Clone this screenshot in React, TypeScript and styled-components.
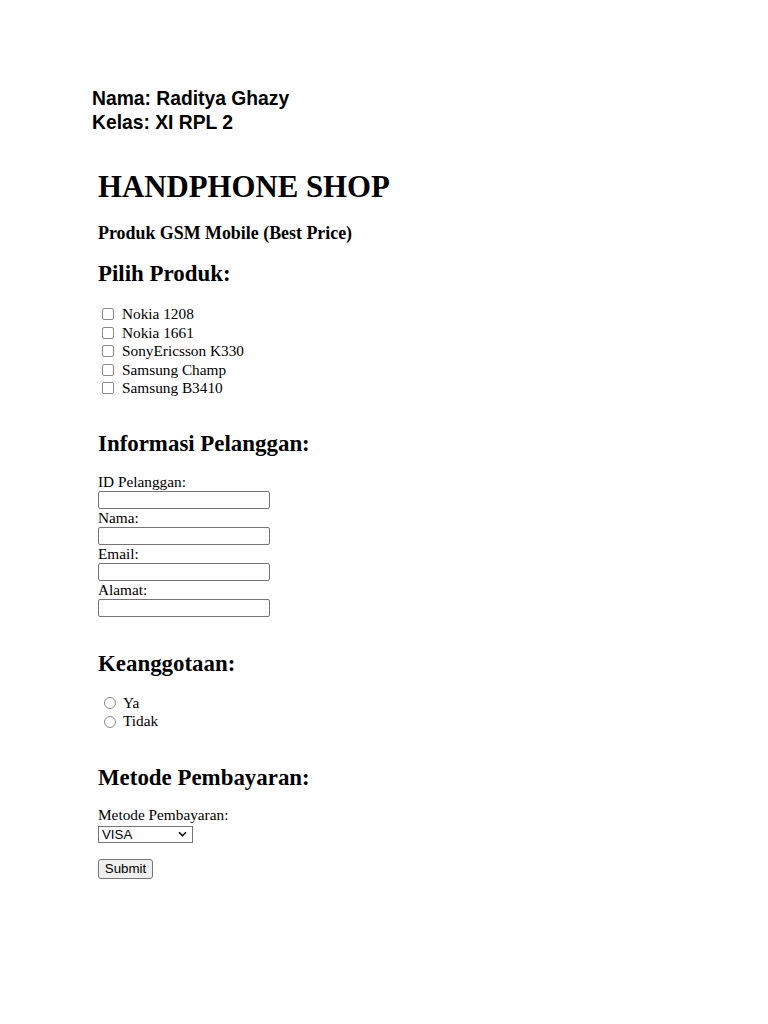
import React from 'react';
import styled, { createGlobalStyle } from 'styled-components';

const GlobalStyle = createGlobalStyle`
  html, body {
    margin: 0;
    padding: 0;
    background: #ffffff;
  }
  body {
    font-family: "Liberation Serif", "Times New Roman", serif;
    color: #000000;
  }
`;

const Page = styled.div`
  width: 768px;
  min-height: 1024px;
  padding-top: 87px;
  box-sizing: border-box;
`;

const Header = styled.div`
  margin-left: 92px;
  font-family: "Liberation Sans", Arial, sans-serif;
  font-weight: bold;
  font-size: 19.3px;
  line-height: 24px;
`;

const Content = styled.div`
  margin-left: 98px;
`;

const Title = styled.h1`
  margin: 35px 0 0 0;
  font-size: 30.8px;
  line-height: 35px;
  font-weight: bold;
`;

const Subtitle = styled.h3`
  margin: 18px 0 0 0;
  font-size: 17.9px;
  line-height: 21px;
  font-weight: bold;
`;

const SectionTitle = styled.h2<{ $gap: number }>`
  margin: ${(p) => p.$gap}px 0 0 0;
  font-size: 22.9px;
  line-height: 26px;
  font-weight: bold;
`;

const OptionList = styled.div<{ $gap: number }>`
  margin-top: ${(p) => p.$gap}px;
  display: flex;
  flex-direction: column;
`;

const OptionRow = styled.label<{ $height: number }>`
  display: flex;
  align-items: center;
  height: ${(p) => p.$height}px;
  font-size: 15.3px;
  line-height: ${(p) => p.$height}px;
`;

const CheckBox = styled.input`
  appearance: none;
  width: 12px;
  height: 12px;
  margin: 0 8px 0 4px;
  border: 1px solid #8a8a8a;
  border-radius: 2px;
  box-sizing: border-box;
  background: #ffffff;
`;

const RadioButton = styled.input`
  appearance: none;
  width: 12px;
  height: 12px;
  margin: 0 7px 0 6px;
  border: 1px solid #8a8a8a;
  border-radius: 50%;
  box-sizing: border-box;
  background: #ffffff;
`;

const Fields = styled.div`
  margin-top: 15.5px;
  display: flex;
  flex-direction: column;
`;

const FieldLabel = styled.label`
  display: block;
  font-size: 15.3px;
  line-height: 18.5px;
`;

const TextInput = styled.input`
  display: block;
  width: 172px;
  height: 17.5px;
  margin: 0;
  padding: 0 2px;
  box-sizing: border-box;
  border: 1px solid #767676;
  border-radius: 2px;
  font-family: "Liberation Sans", Arial, sans-serif;
  font-size: 12.7px;
`;

const PaymentBlock = styled.div`
  margin-top: 15.3px;
`;

const SelectWrap = styled.div`
  position: relative;
  width: 95px;
  margin-top: 1px;
`;

const Select = styled.select`
  display: block;
  appearance: none;
  width: 95px;
  height: 17px;
  margin: 0;
  padding: 0 0 0 3px;
  box-sizing: border-box;
  border: 1px solid #767676;
  border-radius: 0;
  background: #ffffff;
  font-family: "Liberation Sans", Arial, sans-serif;
  font-size: 13.3px;
  line-height: 15px;
  color: #000000;
`;

const Chevron = styled.svg`
  position: absolute;
  right: 6px;
  top: 5px;
  width: 9px;
  height: 6px;
  pointer-events: none;
`;

const SubmitButton = styled.button`
  display: block;
  margin-top: 16px;
  width: 55px;
  height: 20px;
  padding: 0;
  box-sizing: border-box;
  border: 1px solid #767676;
  border-radius: 3px;
  background: #efefef;
  font-family: "Liberation Sans", Arial, sans-serif;
  font-size: 13.3px;
  color: #000000;
`;

const products = ['Nokia 1208', 'Nokia 1661', 'SonyEricsson K330', 'Samsung Champ', 'Samsung B3410'];
const fields = ['ID Pelanggan:', 'Nama:', 'Email:', 'Alamat:'];

export default function App() {
  return (
    <Page>
      <GlobalStyle />
      <Header>
        <div>Nama: Raditya Ghazy</div>
        <div>Kelas: XI RPL 2</div>
      </Header>
      <Content>
        <Title>HANDPHONE SHOP</Title>
        <Subtitle>Produk GSM Mobile (Best Price)</Subtitle>
        <form onSubmit={(e) => e.preventDefault()}>
          <SectionTitle $gap={17}>Pilih Produk:</SectionTitle>
          <OptionList $gap={18}>
            {products.map((p) => (
              <OptionRow key={p} $height={18.5}>
                <CheckBox type="checkbox" name="produk" value={p} />
                {p}
              </OptionRow>
            ))}
          </OptionList>

          <SectionTitle $gap={33.5}>Informasi Pelanggan:</SectionTitle>
          <Fields>
            {fields.map((f) => (
              <React.Fragment key={f}>
                <FieldLabel>{f}</FieldLabel>
                <TextInput type="text" />
              </React.Fragment>
            ))}
          </Fields>

          <SectionTitle $gap={34}>Keanggotaan:</SectionTitle>
          <OptionList $gap={17}>
            <OptionRow $height={18.7}>
              <RadioButton type="radio" name="member" value="ya" />
              Ya
            </OptionRow>
            <OptionRow $height={18.7}>
              <RadioButton type="radio" name="member" value="tidak" />
              Tidak
            </OptionRow>
          </OptionList>

          <SectionTitle $gap={34}>Metode Pembayaran:</SectionTitle>
          <PaymentBlock>
            <FieldLabel>Metode Pembayaran:</FieldLabel>
            <SelectWrap>
              <Select defaultValue="VISA">
                <option>VISA</option>
                <option>MasterCard</option>
                <option>Transfer Bank</option>
              </Select>
              <Chevron viewBox="0 0 9 6">
                <path d="M1 1.2 L4.5 4.7 L8 1.2" fill="none" stroke="#000" strokeWidth="1.6" />
              </Chevron>
            </SelectWrap>
          </PaymentBlock>
          <SubmitButton type="submit">Submit</SubmitButton>
        </form>
      </Content>
    </Page>
  );
}
